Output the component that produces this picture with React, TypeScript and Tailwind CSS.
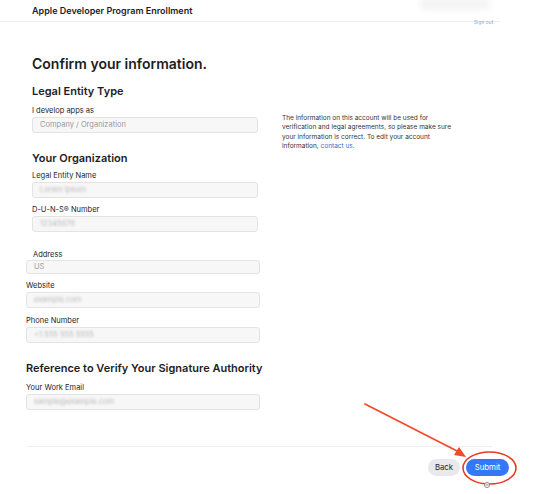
import React from "react";

function Field({ label, value, muted }: { label: string; value: string; muted?: boolean }) {
  return (
    <div className="flex flex-col">
      <div className="text-[7.5px] leading-[9px] text-[#1d1d1f] mb-[2px]">{label}</div>
      <div className="h-[16px] w-full rounded-[3px] border border-[#e3e3e3] bg-[#f7f7f7] flex items-center px-[7px]">
        <span
          className={
            muted
              ? "text-[7.5px] text-[#9a9a9a]"
              : "text-[7.5px] text-[#b9b9b9] blur-[1.3px]"
          }
        >
          {value}
        </span>
      </div>
    </div>
  );
}

export default function App() {
  return (
    <div
      className="relative w-[540px] h-[494px] bg-white overflow-hidden text-[#1d1d1f]"
      style={{ fontFamily: "Inter, 'Liberation Sans', sans-serif" }}
    >
      <header className="relative h-[22px] border-b border-[#ececec] flex items-center pl-[32px] w-[500px]">
        <span className="text-[9px] font-semibold">Apple Developer Program Enrollment</span>
        <span className="absolute left-[420px] top-[-2px] w-[70px] h-[12px] rounded bg-[#f4f4f4] blur-[3px]" />
        <span className="absolute left-[474px] top-[19px] text-[5px] leading-[6px] text-[#5c8fd6] opacity-70">Sign out</span>
      </header>

      <div className="flex">
        <div className="pl-[32px] w-[258px] shrink-0 pt-[33px]">
          <h1 className="text-[14px] leading-[18px] font-semibold">Confirm your information.</h1>
          <h2 className="mt-[11px] text-[11px] leading-[14px] font-semibold">Legal Entity Type</h2>
          <div className="mt-[8px]">
            <Field label="I develop apps as" value="Company / Organization" muted />
          </div>
          <h2 className="mt-[18px] text-[11px] leading-[14px] font-semibold">Your Organization</h2>
          <div className="mt-[6px] flex flex-col gap-[7px]">
            <Field label="Legal Entity Name" value="Lorem Ipsum" />
            <Field label="D-U-N-S® Number" value="12345678" />
          </div>
        </div>
        <div className="pl-[24px] pt-[92px] w-[200px]">
          <p className="text-[6.5px] leading-[9.3px] text-[#333] w-[176px]">
            The information on this account will be used for verification and legal agreements, so please make sure
            your information is correct. To edit your account information,{" "}
            <span className="text-[#2f6fd1]">contact us</span>.
          </p>
        </div>
      </div>

      <div className="pl-[26px] w-[260px]">
        <div className="mt-[17px] h-[8px] overflow-hidden text-[7.5px] leading-[12px] pl-[7px]">Address</div>
        <div className="mt-[3px] h-[14px] w-full rounded-[3px] border border-[#e3e3e3] bg-[#f7f7f7] flex items-center px-[7px]">
          <span className="text-[7.5px] text-[#a0a0a0]">US</span>
        </div>
        <div className="mt-[7px] flex flex-col gap-[8px]">
          <Field label="Website" value="example.com" />
          <Field label="Phone Number" value="+1 555 555 5555" />
        </div>
        <h2 className="mt-[18px] text-[11px] leading-[14px] font-semibold whitespace-nowrap">
          Reference to Verify Your Signature Authority
        </h2>
        <div className="mt-[8px]">
          <Field label="Your Work Email" value="sample@example.com" />
        </div>
      </div>

      <div className="ml-[26px] mt-[36px] w-[466px] border-t border-[#eeeeee]" />

      <div className="flex justify-end gap-[6px] w-[509px] mt-[12px]">
        <button className="h-[17px] w-[32px] rounded-full bg-[#e8e8ed] text-[7.8px] text-[#1d1d1f]">Back</button>
        <button className="h-[17px] w-[43px] rounded-full bg-[#3478f6] text-[7.8px] text-white">Submit</button>
      </div>

      <svg className="absolute left-0 top-0" width="540" height="494" viewBox="0 0 540 494">
        <line x1="365" y1="404" x2="459" y2="452" stroke="#f24a2b" strokeWidth="1.8" strokeLinecap="round" />
        <polygon points="466,457 454,455 459,447" fill="#f24a2b" />
        <ellipse cx="489.5" cy="468" rx="26.5" ry="16" fill="none" stroke="#e63a24" strokeWidth="1.6" />
        <g transform="translate(484,482)">
          <circle cx="3" cy="3" r="2.6" fill="#fff" stroke="#777" strokeWidth="0.8" />
          <path d="M2 1.8 L2 4 M3 1.4 L3 4 M4 1.8 L4 4" stroke="#777" strokeWidth="0.5" />
        </g>
      </svg>
    </div>
  );
}
